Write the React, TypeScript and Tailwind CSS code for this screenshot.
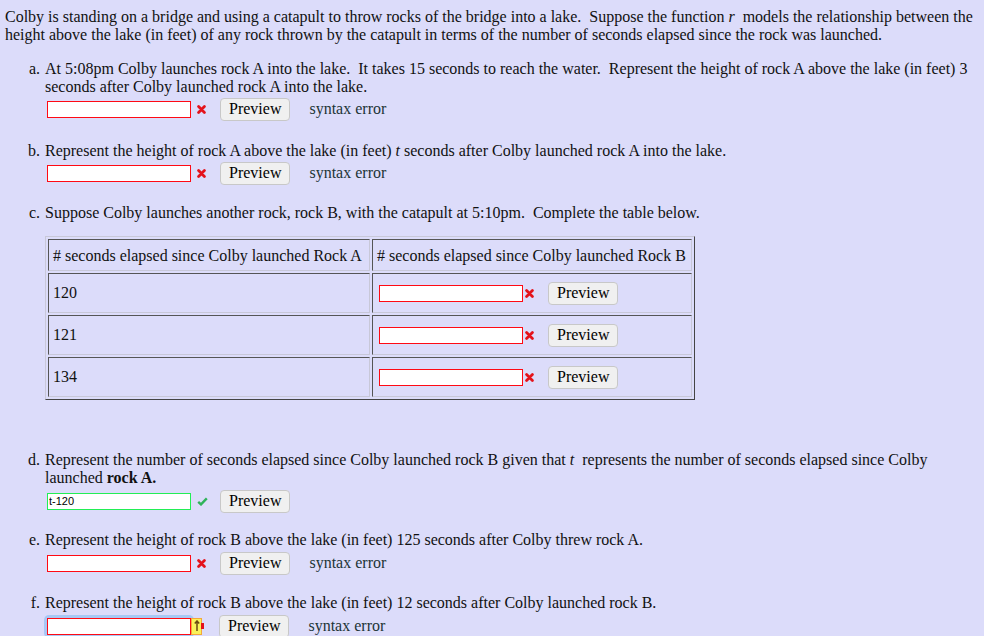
import React from "react";

function XMark() {
  return (
    <svg width="9" height="9" viewBox="0 0 9 9" className="shrink-0">
      <path d="M1.6 1.6 L7.4 7.4 M7.4 1.6 L1.6 7.4" stroke="#e4131b" strokeWidth="2.8" strokeLinecap="round" />
    </svg>
  );
}

function Check() {
  return (
    <svg width="11" height="9" viewBox="0 0 11 9" className="shrink-0">
      <path d="M1.2 4.8 L4 7.4 L9.8 1.4" fill="none" stroke="#2fb35a" strokeWidth="2.4" />
    </svg>
  );
}

function Preview() {
  return (
    <button className="h-[23px] rounded-[4px] border border-[#c8c8c8] bg-[#f0f0f0] px-[8px] text-[16px] leading-none text-black">
      Preview
    </button>
  );
}

function AnswerRow({ state = "bad", value = "", error = true, focus = false }: { state?: "bad" | "good"; value?: string; error?: boolean; focus?: boolean }) {
  const border = state === "good" ? "border-[#22ee55]" : "border-[#ff0a14]";
  return (
    <div className="flex h-[24px] items-center">
      <div className={`ml-[2px] flex items-center ${focus ? "rounded-[2px] shadow-[0_0_0_3px_#a8c8f5]" : ""}`}>
        <input
          readOnly
          value={value}
          className={`h-[17px] w-[144px] border border-solid ${border} bg-white px-[1px] font-['Liberation_Sans',sans-serif] text-[11px] text-black outline-none`}
        />
      </div>
      {focus ? (
        <div className="flex w-[14px] items-center">
          <span className="flex h-[17px] w-[11px] items-center justify-center border border-[#f3a83a] bg-[#f9f25a]">
            <svg width="6" height="12" viewBox="0 0 6 12">
              <path d="M3 1 L3 11 M0.8 3.6 L3 1 L5.2 3.6" fill="none" stroke="#6b4a10" strokeWidth="1.5" />
            </svg>
          </span>
          <span className="ml-[-1px] h-[6px] w-[3px] bg-[#e4131b]" />
        </div>
      ) : (
        <div className="ml-[6px] flex w-[9px] items-center">{state === "good" ? <Check /> : <XMark />}</div>
      )}
      <div className="ml-[14px]">
        <Preview />
      </div>
      {error && <span className="ml-[19px] text-[16px] text-[#1c3436]">syntax error</span>}
    </div>
  );
}

function CellAnswer() {
  return (
    <div className="flex h-[24px] items-center">
      <input readOnly className="h-[17px] w-[144px] border border-solid border-[#ff0a14] bg-white outline-none" />
      <div className="ml-[2px] flex w-[9px] items-center">
        <XMark />
      </div>
      <div className="ml-[14px]">
        <Preview />
      </div>
    </div>
  );
}

function Item({ label, children }: { label: string; children: React.ReactNode }) {
  return (
    <li className="flex">
      <span className="w-[45px] shrink-0 pr-[5px] text-right">{label}</span>
      <div className="min-w-0 flex-1 pr-[8px]">{children}</div>
    </li>
  );
}

export default function App() {
  const cell = "border border-t-[#555] border-l-[#555] border-b-[#c8c8d8] border-r-[#c8c8d8] px-[4px] text-left font-normal";
  return (
    <div className="h-[636px] w-[984px] overflow-hidden bg-[#dcdcfa] font-['Liberation_Serif',serif] text-[16px] leading-[18px] text-[#111]">
      <p className="px-[5px] pt-[8px]">
        Colby is standing on a bridge and using a catapult to throw rocks of the bridge into a lake.&nbsp; Suppose the function <i>r</i>&nbsp; models the relationship between the height above the lake (in feet) of any rock thrown by the catapult in terms of the number of seconds elapsed since the rock was launched.
      </p>
      <ol className="mt-[16px] flex flex-col">
        <Item label="a.">
          <div>
            At 5:08pm Colby launches rock A into the lake.&nbsp; It takes 15 seconds to reach the water.&nbsp; Represent the height of rock A above the lake (in feet) 3 seconds after Colby launched rock A into the lake.
          </div>
          <div className="mt-[1px]">
            <AnswerRow />
          </div>
        </Item>
        <div className="h-[21px]" />
        <Item label="b.">
          <div>
            Represent the height of rock A above the lake (in feet) <i>t</i> seconds after Colby launched rock A into the lake.
          </div>
          <div className="mt-[1px]">
            <AnswerRow />
          </div>
        </Item>
        <div className="h-[19px]" />
        <Item label="c.">
          <div>Suppose Colby launches another rock, rock B, with the catapult at 5:10pm.&nbsp; Complete the table below.</div>
          <table className="mt-[14px] border-separate border-spacing-[2px] border border-t-[#c8c8d8] border-l-[#c8c8d8] border-b-[#444] border-r-[#444]">
            <thead>
              <tr className="h-[32px]">
                <th className={`${cell} w-[322px] whitespace-nowrap pt-[2px]`}>
                  # seconds elapsed since Colby launched Rock A
                </th>
                <th className={`${cell} w-[320px] whitespace-nowrap pt-[2px]`}>
                  # seconds elapsed since Colby launched Rock B
                </th>
              </tr>
            </thead>
            <tbody>
              {["120", "121", "134"].map((n) => (
                <tr key={n} className="h-[40px]">
                  <td className={cell}>{n}</td>
                  <td className={`${cell} pl-[6px]`}>
                    <CellAnswer />
                  </td>
                </tr>
              ))}
            </tbody>
          </table>
        </Item>
        <div className="h-[51px]" />
        <Item label="d.">
          <div>
            Represent the number of seconds elapsed since Colby launched rock B given that <i>t</i>&nbsp; represents the number of seconds elapsed since Colby launched <b>rock A.</b>
          </div>
          <div className="mt-[2px]">
            <AnswerRow state="good" value="t-120" error={false} />
          </div>
        </Item>
        <div className="h-[18px]" />
        <Item label="e.">
          <div>Represent the height of rock B above the lake (in feet) 125 seconds after Colby threw rock A.</div>
          <div className="mt-[2px]">
            <AnswerRow />
          </div>
        </Item>
        <div className="h-[19px]" />
        <Item label="f.">
          <div>Represent the height of rock B above the lake (in feet) 12 seconds after Colby launched rock B.</div>
          <div className="mt-[2px]">
            <AnswerRow focus />
          </div>
        </Item>
      </ol>
    </div>
  );
}
